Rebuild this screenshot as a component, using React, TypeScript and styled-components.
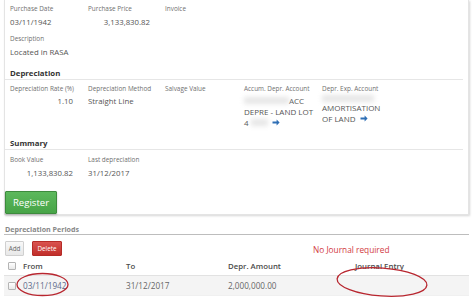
import React from "react";
import styled, { createGlobalStyle } from "styled-components";

const Global = createGlobalStyle`
  html, body { margin: 0; padding: 0; background: #fff; }
  body { font-family: "Open Sans", "Noto Sans", sans-serif; color: #555; width: 474px; height: 303px; overflow: hidden; position: relative; }
`;

const Page = styled.div`
  position: relative;
  width: 474px;
  height: 303px;
`;

const Card = styled.div`
  margin-left: 4px;
  width: 463px;
  border: 1px solid #e4e4e4;
  border-top: none;
  box-shadow: 1px 1px 2px rgba(0, 0, 0, 0.16);
  background: #fff;
`;

const Body = styled.div`
  padding: 4px 5px 0 5px;
`;

const Grid = styled.div`
  display: grid;
  grid-template-columns: 78px 77px 79px 78px 78px;
`;

const Field = styled.div<{ $top?: number }>`
  display: flex;
  flex-direction: column;
  margin-top: ${(p) => p.$top ?? 0}px;
`;

const Label = styled.div`
  font-size: 6.4px;
  line-height: 10px;
  height: 10px;
  color: #6f6f6f;
  white-space: nowrap;
`;

const Value = styled.div<{ $num?: boolean; $lh?: number }>`
  font-size: 7.8px;
  line-height: ${(p) => p.$lh ?? 12}px;
  color: #555;
  white-space: nowrap;
  text-align: ${(p) => (p.$num ? "right" : "left")};
  padding-right: ${(p) => (p.$num ? 15 : 0)}px;
  margin-top: 2px;
`;

const Lines = styled.div`
  margin-top: 1px;
`;

const Line = styled.div`
  font-size: 8px;
  line-height: 11px;
  color: #555;
  white-space: nowrap;
  display: flex;
  align-items: center;
`;

const Blur = styled.span<{ $w: number }>`
  display: inline-block;
  width: ${(p) => p.$w}px;
  height: 7px;
  background: #e6e6e6;
  filter: blur(2.5px);
`;

const SectionHead = styled.div<{ $top: number }>`
  margin: ${(p) => p.$top}px 0 0 -5px;
  padding: 0 5px;
  font-size: 7.8px;
  font-weight: 700;
  line-height: 12px;
  color: #333;
  border-bottom: 1px solid #e6e6e6;
`;

const GridTop = styled(Grid)<{ $top: number }>`
  margin-top: ${(p) => p.$top}px;
`;

const Footer = styled.div`
  margin-top: 12px;
  display: flex;
`;

const RegisterButton = styled.button`
  width: 52px;
  height: 23px;
  padding: 0;
  border: 1px solid #3d8b3d;
  border-radius: 1px;
  background: linear-gradient(#5cb85c, #47a447);
  color: #fff;
  font-family: "Open Sans", sans-serif;
  font-size: 9.6px;
  box-shadow: 0 1px 2px rgba(0, 0, 0, 0.25);
`;

const Periods = styled.div`
  margin-left: 4px;
  width: 465px;
  margin-top: 9px;
`;

const PeriodsHead = styled.div`
  font-size: 7.1px;
  font-weight: 700;
  line-height: 10px;
  color: #888;
  padding-left: 1px;
  border-bottom: 1px solid #bdbdbd;
`;

const Toolbar = styled.div`
  display: flex;
  gap: 8px;
  margin-top: 6px;
  padding-left: 1px;
`;

const SmallButton = styled.button<{ $danger?: boolean }>`
  height: 15px;
  width: ${(p) => (p.$danger ? 30 : 19)}px;
  padding: 0;
  font-family: "Open Sans", sans-serif;
  font-size: 6.3px;
  border-radius: 1px;
  border: 1px solid ${(p) => (p.$danger ? "#b52b27" : "#d0d0d0")};
  background: ${(p) =>
    p.$danger ? "linear-gradient(#d9534f, #c12e2a)" : "linear-gradient(#f8f8f8, #e8e8e8)"};
  color: ${(p) => (p.$danger ? "#fff" : "#666")};
`;

const Row = styled.div<{ $head?: boolean }>`
  display: grid;
  grid-template-columns: 19px 103px 102px 127px 114px;
  align-items: center;
  height: 19px;
  background: ${(p) => (p.$head ? "#fff" : "#f4f4f4")};
  border-bottom: 1px solid ${(p) => (p.$head ? "#e2e2e2" : "#f0f0f0")};
  font-size: ${(p) => (p.$head ? 7.8 : 8.2)}px;
  color: ${(p) => (p.$head ? "#4a4a4a" : "#666")};
  font-weight: ${(p) => (p.$head ? 600 : 400)};
  white-space: nowrap;
`;

const Cell = styled.div<{ $link?: boolean }>`
  color: ${(p) => (p.$link ? "#5d6b8a" : "inherit")};
`;

const Check = styled.span`
  display: block;
  width: 6px;
  height: 6px;
  margin-left: 4px;
  border: 1px solid #b4b4b4;
  border-radius: 1px;
  background: linear-gradient(#fff, #e9e9e9);
`;

const Note = styled.div`
  position: absolute;
  left: 313px;
  top: 244px;
  font-size: 8.3px;
  line-height: 12px;
  color: #d23a3f;
  white-space: nowrap;
`;

const Marks = styled.svg`
  position: absolute;
  left: 0;
  top: 0;
  pointer-events: none;
`;

const Arrow = () => (
  <svg width="8" height="7" viewBox="0 0 8 7" style={{ marginLeft: 4 }}>
    <path d="M0.5 2.6 H4.6 V0.6 L7.6 3.5 L4.6 6.4 V4.4 H0.5 Z" fill="#2f6fb5" />
  </svg>
);

export default function App() {
  return (
    <Page>
      <Global />
      <Card>
        <Body>
          <Grid>
            <Field>
              <Label>Purchase Date</Label>
              <Value>03/11/1942</Value>
            </Field>
            <Field>
              <Label>Purchase Price</Label>
              <Value $num>3,133,830.82</Value>
            </Field>
            <Field>
              <Label>Invoice</Label>
            </Field>
          </Grid>
          <Field $top={6}>
            <Label>Description</Label>
            <Value>Located in RASA</Value>
          </Field>

          <SectionHead $top={9}>Depreciation</SectionHead>
          <GridTop $top={4}>
            <Field>
              <Label>Depreciation Rate (%)</Label>
              <Value $num $lh={11}>1.10</Value>
            </Field>
            <Field>
              <Label>Depreciation Method</Label>
              <Value $lh={11}>Straight Line</Value>
            </Field>
            <Field>
              <Label>Salvage Value</Label>
            </Field>
            <Field>
              <Label>Accum. Depr. Account</Label>
              <Lines>
                <Line>
                  <Blur $w={45} />
                  ACC
                </Line>
                <Line>DEPRE - LAND LOT</Line>
                <Line>
                  4&nbsp;
                  <Blur $w={17} />
                  <Arrow />
                </Line>
              </Lines>
            </Field>
            <Field>
              <Label>Depr. Exp. Account</Label>
              <Lines>
                <Line>
                  <Blur $w={52} />
                </Line>
                <Line>AMORTISATION</Line>
                <Line>
                  OF LAND
                  <Arrow />
                </Line>
              </Lines>
            </Field>
          </GridTop>

          <SectionHead $top={9}>Summary</SectionHead>
          <GridTop $top={5}>
            <Field>
              <Label>Book Value</Label>
              <Value $num>1,133,830.82</Value>
            </Field>
            <Field>
              <Label>Last depreciation</Label>
              <Value>31/12/2017</Value>
            </Field>
          </GridTop>
        </Body>
        <Footer>
          <RegisterButton>Register</RegisterButton>
        </Footer>
      </Card>

      <Periods>
        <PeriodsHead>Depreciation Periods</PeriodsHead>
        <Toolbar>
          <SmallButton>Add</SmallButton>
          <SmallButton $danger>Delete</SmallButton>
        </Toolbar>
        <Row $head>
          <Check />
          <Cell>From</Cell>
          <Cell>To</Cell>
          <Cell>Depr. Amount</Cell>
          <Cell>Journal Entry</Cell>
        </Row>
        <Row>
          <Check />
          <Cell $link>03/11/1942</Cell>
          <Cell>31/12/2017</Cell>
          <Cell>2,000,000.00</Cell>
          <Cell />
        </Row>
      </Periods>

      <Note>No Journal required</Note>
      <Marks width="474" height="303" viewBox="0 0 474 303">
        <ellipse cx="42.5" cy="284.5" rx="25.5" ry="11" fill="none" stroke="#b8262f" strokeWidth="1.3" />
        <ellipse
          cx="382"
          cy="282"
          rx="45"
          ry="14"
          transform="rotate(4 382 282)"
          fill="none"
          stroke="#b8262f"
          strokeWidth="1.3"
        />
      </Marks>
    </Page>
  );
}
